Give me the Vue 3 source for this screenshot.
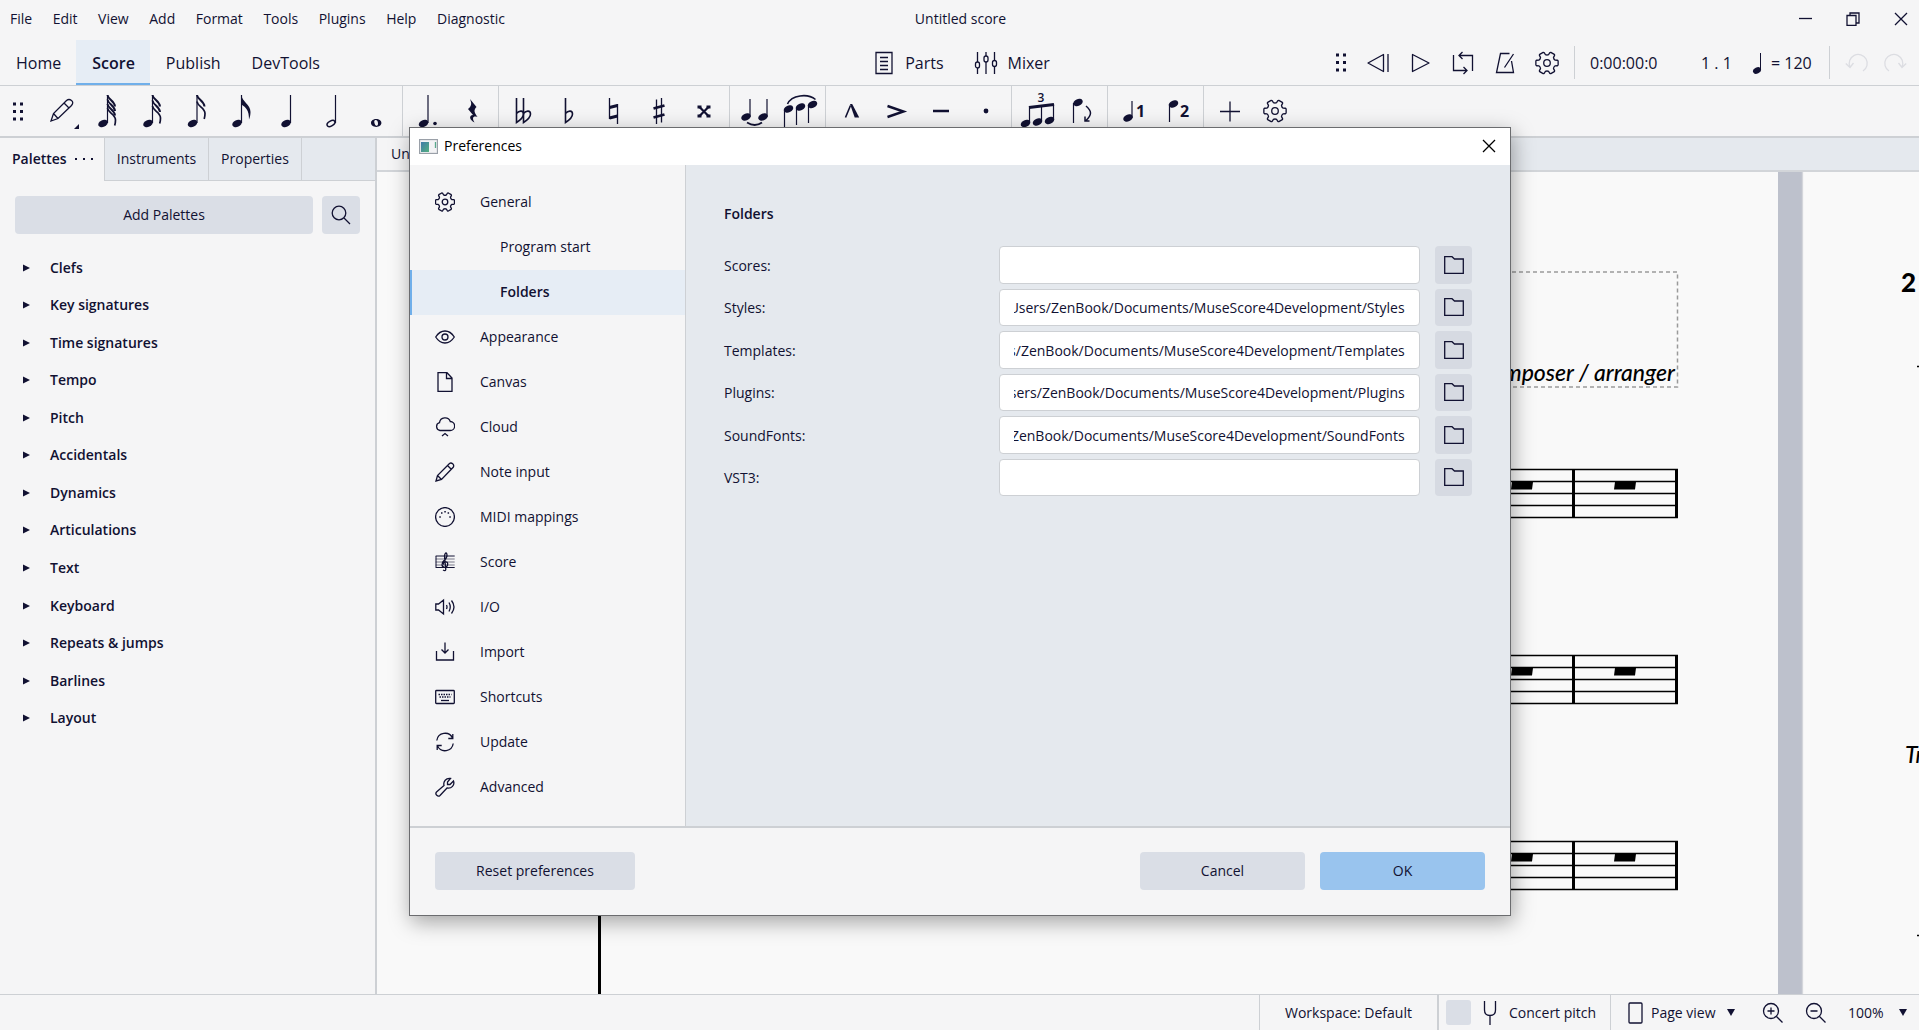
<script setup>
import { onMounted, ref } from 'vue'

const menus = ['File', 'Edit', 'View', 'Add', 'Format', 'Tools', 'Plugins', 'Help', 'Diagnostic']
const pages = ['Home', 'Score', 'Publish', 'DevTools']
const palettes = [
  'Clefs', 'Key signatures', 'Time signatures', 'Tempo', 'Pitch', 'Accidentals', 'Dynamics',
  'Articulations', 'Text', 'Keyboard', 'Repeats & jumps', 'Barlines', 'Layout',
]

const head = (x, y) => `<ellipse cx="${x}" cy="${y}" rx="5" ry="3.4" transform="rotate(-25 ${x} ${y})" fill="currentColor" stroke="none"/>`
const stem = (x, y1, y2) => `<path d="M${x} ${y1}V${y2}" stroke-width="1.2"/>`
const flag = (x, y) => `<path d="M${x} ${y}c.5 4.5 7 6 7.500 11.500" stroke-width="2"/>`
const tail = (x, y) => `<path d="M${x} ${y}c.5 5 8 6 8 12c0 2-.2 3.500-.8 5.500" stroke-width="1.700"/>`

// Outline of a six-toothed cog centred on the given point.
function cog(c, outer, inner) {
  const pt = (r, deg) => {
    const a = (deg * Math.PI) / 180
    return `${(c + r * Math.cos(a)).toFixed(2)} ${(c + r * Math.sin(a)).toFixed(2)}`
  }
  let d = ''
  for (let i = 0; i < 6; i++) {
    const a = i * 60
    d += `${i ? 'L' : 'M'}${pt(inner, a - 19)}L${pt(outer - 0.6, a - 15)}Q${pt(outer, a - 13)} ${pt(outer, a - 10)}`
    d += `L${pt(outer, a + 10)}Q${pt(outer, a + 13)} ${pt(outer - 0.6, a + 15)}L${pt(inner, a + 19)}Q${pt(inner - 1, a + 30)} ${pt(inner, a + 41)}`
  }
  return `<path d="${d}Z"/><circle cx="${c}" cy="${c}" r="${outer * 0.29}"/>`
}

const flat = (x) => `<path d="M${x} 12V36.500c4-2.500 7-5 7-8.500c0-3.500-4-4-7-.5" stroke-width="1.600"/>`

const tool = {
  pencil: '<path d="M12 35l2.500-7.500L27.500 14.500q2.500-2 5 0t0 5L19 32.500zM25 17l5 5M14.500 27.500l4.500 5"/><path d="M40 43v-5l-5 5z" fill="currentColor" stroke="none"/>',
  n64: head(19, 37.5) + stem(23.5, 9, 37) + flag(23.5, 9) + flag(23.5, 13.5) + flag(23.5, 18) + tail(23.5, 22),
  n32: head(19, 37.5) + stem(23.5, 9, 37) + flag(23.5, 9) + flag(23.5, 14.500) + tail(23.5, 20),
  n16: head(18.5, 37.5) + stem(23, 9, 37) + flag(23, 9) + tail(23, 15.500),
  n8: head(18, 37.5) + stem(22.5, 9, 37) + '<path d="M22.500 9c.5 7 9 9 9 17c0 3-.6 5-1.500 7.500c.2-9-3-12-7.500-15z" fill="currentColor" stroke="none"/>',
  n4: head(22, 37.5) + stem(26.5, 9, 37),
  n2: '<ellipse cx="22" cy="37.500" rx="4.300" ry="2.400" transform="rotate(-30 22 37.500)" stroke-width="1.500"/>' + stem(26.5, 9, 37),
  n1: '<path fill-rule="evenodd" d="M17 37c0-2.300 2.300-3.900 5.200-3.900s5.200 1.600 5.200 3.900s-2.300 3.900-5.200 3.900S17 39.300 17 37zM20.300 36.300c.2 2 1.400 3.700 2.600 3.400s1.200-1.700 1-3.200s-1.200-2.800-2.400-2.500s-1.300 1.300-1.200 2.300z" fill="currentColor" stroke="none"/>',
  dot: head(18.5, 37.5) + stem(23, 9, 37) + '<circle cx="30" cy="37.500" r="1.800" fill="currentColor" stroke="none"/>',
  rest: '<path d="M20 13l6.500 8c-3 3-2.500 5 1 10c-4-1.500-6 .5-3 5.500c-5-2.500-6-7-1.500-7.500l-5-6c3.500-3 4-5 2-10z" fill="currentColor" stroke="none"/>',
  dflat: flat(15.5) + flat(22.5),
  flat: flat(19.5),
  natural: '<path d="M18.500 12V33M26.500 18V38" stroke-width="1.300"/><path d="M18.500 21.500l8-2M18.500 32l8-2" stroke-width="3"/>',
  sharp: '<path d="M20.500 13.500V38M25.500 12V36.500" stroke-width="1.300"/><path d="M17.500 22.500l11-3M17.500 31.500l11-3" stroke-width="2.800"/>',
  dsharp: '<path d="M18.500 21l9 9M27.500 21l-9 9" stroke-width="2.200"/><path d="M16.500 19.500h4v3h-4zM25.500 19.500h4v3h-4zM16.500 28.500h4v3h-4zM25.500 28.500h4v3h-4z" fill="currentColor" stroke="none"/>',
  tie: head(14, 31) + stem(18, 13, 31) + head(31, 31) + stem(35, 13, 31) + '<path d="M15 36.500q8 5 15 0" stroke-width="1.800"/>',
  slur: head(11.500, 23) + stem(7.5, 24, 41) + head(23.500, 21) + stem(19.5, 22, 39) + head(35.500, 18.5) + stem(31.5, 19, 37) + '<path d="M10.500 18c4-9 20-11 28-4.500" stroke-width="1.600"/>',
  marcato: '<path d="M17.500 31.500l5-12" stroke-width="1.600"/><path d="M22 18h2.200l7 13.500h-4.500z" fill="currentColor" stroke="none"/>',
  accent: '<path d="M14.500 20l16 5.500l-16 5.500" stroke-width="2.400"/>',
  tenuto: '<path d="M15 25h16" stroke-width="2.500"/>',
  staccato: '<circle cx="23" cy="25" r="2.400" fill="currentColor" stroke="none"/>',
  tuplet: head(11.500, 37.5) + head(23.500, 36) + head(35.500, 34.5) + stem(15.5, 20, 37) + stem(27.500, 20, 35) + stem(39.5, 18, 34) + '<path d="M15 21.500l25-3" stroke-width="3"/><text x="27" y="16" text-anchor="middle" font-size="12" font-weight="600" fill="currentColor" stroke="none">3</text>',
  flip: head(19, 16.500) + stem(14.5, 17, 37) + '<path d="M27 20c6 5 6 9 0 14.500M26 30.500v4.500h4.500" stroke-width="1.500"/>',
  v1: head(18, 32) + stem(22, 15, 32) + '<text x="26" y="31" font-size="16" font-weight="700" fill="currentColor" stroke="none">1</text>',
  v2: head(18.500, 18) + stem(14.5, 18, 36) + '<text x="25" y="31" font-size="16" font-weight="700" fill="currentColor" stroke="none">2</text>',
  plus: '<path d="M14 25.500h20M24 15.500v20"/>',
  cog: `<g transform="translate(12 13)">${cog(12, 11.3, 8.6)}</g>`,
}

const toolGroups = [
  ['pencil', 'n64', 'n32', 'n16', 'n8', 'n4', 'n2', 'n1'],
  ['dot', 'rest'],
  ['dflat', 'flat', 'natural', 'sharp', 'dsharp'],
  ['tie', 'slur'],
  ['marcato', 'accent', 'tenuto', 'staccato'],
  ['tuplet', 'flip'],
  ['v1', 'v2'],
  ['plus', 'cog'],
]

const transport = [
  { name: 'Rewind', d: '<path d="M16.500 3.500v17L1 12zM21 3v18" stroke-linejoin="round"/>' },
  { name: 'Play', d: '<path d="M3.500 3.500v17L20 12z" stroke-linejoin="round"/>' },
  { name: 'Loop', d: '<path d="M2.500 4v15.500H16M12.500 16l3.500 3.500l-3.500 3.500M21.500 20V4.500H8M11.500 1L8 4.500L11.500 8"/>' },
  { name: 'Metronome', d: '<path d="M16.500 2.500h-9L3.500 21.500h17L18.500 10M11.500 16.500L20.500 3"/>' },
  { name: 'Playback settings', d: cog(12, 11.3, 8.6) },
]

const sections = [
  { label: 'General', icon: cog(10, 9.6, 7.3) },
  { label: 'Program start', sub: true },
  { label: 'Folders', sub: true, active: true },
  { label: 'Appearance', icon: '<path d="M.7 10Q4.500 4 10 4t9.300 6Q15.500 16 10 16T.7 10z"/><circle cx="10" cy="10" r="3"/>' },
  { label: 'Canvas', icon: '<path d="M3 .7h9L17 6v13.300H3zM11.500 .7V6.500H17"/>' },
  { label: 'Cloud', icon: '<path d="M5 13.500a4 4 0 0 1-.5-7.800a5.600 5.600 0 0 1 10.800-1.200a4.500 4.500 0 0 1-.3 9zM7 19l3-2.500l3 2.500"/>' },
  { label: 'Note input', icon: '<path d="M1 19l1.500-5.500L14.500 1.500q1.500-1.200 3.200.3t.5 3.500L6.500 17.500zM12.500 3.500l4 4M2.500 13.500l4 4"/>' },
  { label: 'MIDI mappings', icon: '<circle cx="10" cy="10" r="9.400"/><path d="M4.300 10h1.500M6 6h1.500M9.300 4.700h1.500M12.600 6h1.500M14.300 10h1.500" stroke-width="1.500"/>' },
  { label: 'Score', icon: '<path d="M1 4v11.500M.7 4h19M.7 15.500h19" stroke-width="1"/><path d="M.7 7h19M.7 10h19M.7 13h19" stroke-width="1" stroke-opacity=".55"/><path d="M8 18q2.500 1.500 2.800-.5L9.500 4q.5-3 1.500-3t1 3Q11.500 6.500 9 8.500t-2 4.500t3 2.300t2.700-3T10 10t-1 2.500" stroke-width="1.300"/>' },
  { label: 'I/O', icon: '<path d="M.8 7h2.700l5-4v14l-5-4H.8zM11.500 8q1 2 0 4M14 5.500q2.500 4.500 0 9M16.500 3.500q5 6.500 0 13"/>' },
  { label: 'Import', icon: '<path d="M1.500 9v9h17V9M10 .5v10.500M6.500 7.500L10 11l3.500-3.500"/>' },
  { label: 'Shortcuts', icon: '<rect x=".7" y="3.500" width="18.600" height="13" rx=".8"/><path d="M3.500 7.500h13M4.500 10h11" stroke-dasharray="1.500 1"/><path d="M6 13.500h8"/>' },
  { label: 'Update', icon: '<path d="M1.800 8.500A8.300 8.300 0 0 1 17.500 6M18.200 11.500A8.300 8.300 0 0 1 2.500 14M17.800 2v4.500h-4.500M2.200 18v-4.500h4.500"/>' },
  { label: 'Advanced', icon: '<path d="M1.500 15L9 8.500C8 4.500 11 .8 15.500 1.500L12.500 5v2.500H15l3.500-3.500C20 8 16.500 12 12 11L5 18.500Q3.500 20 1.800 18.300T1.500 15z"/>' },
]

const base = 'C:/Users/ZenBook/Documents/MuseScore4Development/'
const folders = ref([
  { id: 'scores', label: 'Scores:', path: '' },
  { id: 'styles', label: 'Styles:', path: base + 'Styles' },
  { id: 'templates', label: 'Templates:', path: base + 'Templates' },
  { id: 'plugins', label: 'Plugins:', path: base + 'Plugins' },
  { id: 'soundfonts', label: 'SoundFonts:', path: base + 'SoundFonts' },
  { id: 'vst3', label: 'VST3:', path: '' },
])

// Long paths show their last part, which is the one that differs.
const form = ref(null)
onMounted(() => {
  form.value.querySelectorAll('input').forEach((el) => {
    el.scrollLeft = el.scrollWidth
  })
})

const staves = [298, 484, 670]
</script>

<template>
  <div class="app">
    <header class="menubar">
      <nav class="menus">
        <button v-for="m in menus" :key="m">{{ m }}</button>
      </nav>
      <h1>Untitled score</h1>
      <div class="window-buttons">
        <button aria-label="Minimize"><svg width="14" height="14"><path d="M1 6.500h13" /></svg></button>
        <button aria-label="Restore"><svg width="14" height="14"><path d="M1 3.500h9v10H1zM4 3.500V1h9v10h-3" /></svg></button>
        <button aria-label="Close"><svg width="14" height="14"><path d="M1 1l12 12M13 1L1 13" /></svg></button>
      </div>
    </header>

    <div class="mainbar">
      <nav class="pages">
        <a v-for="p in pages" :key="p" href="#" :class="{ current: p === 'Score' }">{{ p }}</a>
      </nav>
      <div class="panels">
        <button class="parts">
          <svg width="18" height="24"><path d="M1 1.500h16v21H1zM5 6.500h8M5 10.500h8M5 14.500h8M5 18.500h8" /></svg>Parts
        </button>
        <button class="mixer">
          <svg width="24" height="24"><path d="M3.500 1v10M3.500 17v6M12 1v4M12 11v12M20.500 1v8.500M20.500 15.500v7.500" /><rect x="1.500" y="11" width="4" height="6" rx="2" /><rect x="10" y="5" width="4" height="6" rx="2" /><rect x="18.500" y="9.500" width="4" height="6" rx="2" /></svg>Mixer
        </button>
      </div>
      <div class="transport">
        <svg class="grip" width="12" height="19"><path d="M1 2h3M8 2h3M1 9.500h3M8 9.500h3M1 17h3M8 17h3" stroke-width="3" /></svg>
        <button v-for="t in transport" :key="t.name" :aria-label="t.name"><svg width="24" height="24" v-html="t.d"></svg></button>
        <i class="rule"></i>
        <span class="time">0:00:00:0</span>
        <span class="beat">1 . 1</span>
        <span class="tempo"><svg width="15" height="24"><path d="M8.500 2v17" stroke-width="1" /><ellipse cx="5" cy="19.500" rx="4.200" ry="3" transform="rotate(-25 5 19.500)" fill="currentColor" stroke="none" /></svg>= 120</span>
        <i class="rule late"></i>
        <button class="history" aria-label="Undo" disabled><svg width="24" height="24"><path d="M5 16A9 9 0 1 1 18 20M.8 12.500L5 16.500l3.500-4.500" /></svg></button>
        <button class="history" aria-label="Redo" disabled><svg width="24" height="24"><path d="M19 16A9 9 0 1 0 6 20M23.200 12.500L19 16.500L15.500 12" /></svg></button>
      </div>
    </div>

    <div class="notebar">
      <svg class="grip" width="12" height="19"><path d="M1 2h3M8 2h3M1 9.500h3M8 9.500h3M1 17h3M8 17h3" stroke-width="3" /></svg>
      <div v-for="(g, i) in toolGroups" :key="i" class="tools">
        <button v-for="t in g" :key="t" :aria-label="t"><svg width="45" height="50" v-html="tool[t]"></svg></button>
      </div>
    </div>

    <div class="workspace">
      <aside class="sidebar">
        <div class="side-tabs">
          <button class="current palettes-tab">Palettes<svg width="19" height="4"><path d="M0 2h2M8 2h2M16 2h2" stroke-width="2" /></svg></button>
          <button class="instruments-tab">Instruments</button>
          <button class="properties-tab">Properties</button>
          <span class="filler"></span>
        </div>
        <div class="palette-actions">
          <button class="flat-button add">Add Palettes</button>
          <button class="flat-button search" aria-label="Search">
            <svg width="20" height="20"><circle cx="8" cy="8" r="6.800" /><path d="M13 13l6 6" /></svg>
          </button>
        </div>
        <ul class="palettes">
          <li v-for="p in palettes" :key="p"><svg width="7" height="8"><path d="M0 .5L7 4L0 7.500z" fill="currentColor" stroke="none" /></svg>{{ p }}</li>
        </ul>
      </aside>

      <main class="notation">
        <div class="score-tabs"><button>Untitled score</button></div>
        <div class="canvas">
          <svg class="sheet" width="1542" height="822">
            <rect x="1401" y="0" width="24" height="822" fill="#bdc1cc" stroke="none" />
            <path d="M1425.500 0V822" stroke="#d4d6db" />
            <path d="M400 100H1300.500V215H400" stroke="#9a9a9a" stroke-width="1.500" stroke-dasharray="4 3" />
            <text class="credit" x="1298" y="209" text-anchor="end">Composer / arranger</text>
            <g v-for="y in staves" :key="y">
              <path v-for="n in 5" :key="n" :d="`M222 ${y + (n - 1) * 12 - 0.5}H1301`" stroke="#000" stroke-width="1.300" />
              <path :d="`M1196.500 ${y - 1}v49M1299.500 ${y - 1}v49`" stroke="#000" stroke-width="3" />
              <path :d="`M1135 ${y + 12}h21l-1 7.500h-21zM1238 ${y + 12}h21l-1 7.500h-21z`" fill="#000" stroke="none" />
            </g>
            <path d="M222.500 298V822" stroke="#000" stroke-width="3" />
            <text class="part" x="1524" y="120">2</text>
            <text class="instrument" x="1528" y="591">Tr.</text>
            <path d="M1540 194.500h3M1540 763.500h3" stroke="#000" stroke-width="1.500" />
          </svg>
        </div>
      </main>
    </div>

    <footer class="statusbar">
      <button class="segment ws">Workspace: Default</button>
      <label class="segment pitch">
        <input type="checkbox" />
        <svg width="14" height="24"><path d="M1.500 0v9q0 5.500 5.500 5.500t5.500-5.500V0M7 14.500V24" /></svg>
        Concert pitch
      </label>
      <div class="segment view">
        <svg width="15" height="22"><rect x="1" y="1" width="13" height="20" rx="1" /></svg>
        <select class="mode" aria-label="View mode"><option>Page view</option></select>
        <svg class="caret" width="8" height="7"><path d="M0 0h8L4 7z" fill="currentColor" stroke="none" /></svg>
        <button aria-label="Zoom in"><svg width="22" height="22"><circle cx="9" cy="9" r="7.500" /><path d="M14.500 14.500l6 6M5.500 9h7M9 5.500v7" /></svg></button>
        <button aria-label="Zoom out"><svg width="22" height="22"><circle cx="9" cy="9" r="7.500" /><path d="M14.500 14.500l6 6M5.500 9h7" /></svg></button>
        <select class="percent" aria-label="Zoom"><option>100%</option></select>
        <svg width="8" height="7"><path d="M0 0h8L4 7z" fill="currentColor" stroke="none" /></svg>
      </div>
    </footer>

    <div class="overlay">
      <section class="dialog" role="dialog" aria-label="Preferences">
        <div class="titlebar">
          <svg width="19" height="15">
            <defs><linearGradient id="pane" x1="0" y1="0" x2="1" y2="1"><stop offset="0" stop-color="#3f7aa8" /><stop offset="1" stop-color="#54b080" /></linearGradient></defs>
            <rect x=".5" y=".5" width="18" height="14" fill="#f3f3f5" stroke="#9aa0a8" />
            <rect x="2" y="3" width="8" height="10" fill="url(#pane)" stroke="none" />
            <path d="M16.500 3v6" stroke="#5aa98c" />
          </svg>
          <h2>Preferences</h2>
          <button aria-label="Close"><svg width="14" height="14"><path d="M1 1l12 12M13 1L1 13" /></svg></button>
        </div>
        <div class="dialog-body">
          <nav class="sections">
            <a v-for="s in sections" :key="s.label" href="#" :class="{ sub: s.sub, active: s.active }">
              <svg v-if="s.icon" width="20" height="20" v-html="s.icon"></svg>{{ s.label }}
            </a>
          </nav>
          <div class="content">
            <h3>Folders</h3>
            <form ref="form" class="folders" @submit.prevent>
              <div v-for="f in folders" :key="f.id" class="folder">
                <label :for="f.id">{{ f.label }}</label>
                <input :id="f.id" v-model="f.path" type="text" spellcheck="false" />
                <button type="button" :aria-label="'Choose folder, ' + f.label">
                  <svg width="20" height="18"><path d="M.7 .7h7.300l2.500 2.300h8.800v14.300H.7z" /></svg>
                </button>
              </div>
            </form>
          </div>
        </div>
        <div class="dialog-footer">
          <button class="flat-button reset">Reset preferences</button>
          <button class="flat-button choice">Cancel</button>
          <button class="flat-button choice ok">OK</button>
        </div>
      </section>
    </div>
  </div>
</template>

<style>
body {
  margin: 0;
  overflow: hidden;
}
</style>

<style scoped>
.app {
  position: relative;
  display: flex;
  flex-direction: column;
  height: 100vh;
  background: #f5f5f6;
  color: #111132;
  font: 14px/20px "Open Sans", "Noto Sans", sans-serif;
  overflow: hidden;
}
*,
*::before {
  box-sizing: border-box;
}
button,
input,
select {
  margin: 0;
  padding: 0;
  border: 0;
  background: none;
  color: inherit;
  font: inherit;
}
select {
  appearance: none;
}
a {
  color: inherit;
  text-decoration: none;
}
h1,
h2,
h3,
ul {
  margin: 0;
  padding: 0;
  font: inherit;
  list-style: none;
}
svg {
  display: block;
  flex: none;
  fill: none;
  stroke: currentColor;
  stroke-width: 1.3px;
}

.menubar {
  display: grid;
  grid-template-columns: 1fr auto 1fr;
  align-items: center;
  height: 38px;
  flex: none;
}
.menubar h1 {
  padding-left: 2px;
}
.menus {
  display: flex;
  justify-content: space-between;
  width: 515px;
}
.menus button {
  padding: 0 10px;
}
.window-buttons {
  display: flex;
  justify-content: flex-end;
}
.window-buttons button {
  display: flex;
  justify-content: center;
  width: 48px;
}
.window-buttons button:last-child {
  width: 42px;
  padding-left: 6px;
}

.mainbar {
  display: grid;
  grid-template-columns: 1fr auto 1fr;
  height: 48px;
  padding-top: 2px;
  flex: none;
  border-bottom: 1px solid #cdd0d4;
  font-size: 16px;
}
.pages {
  display: flex;
}
.pages a {
  display: flex;
  align-items: center;
  padding: 0 15px 0 16px;
}
.pages .current {
  background: #e6edf5;
  box-shadow: inset 0 -2px #70afea;
  font-weight: 600;
}
.panels {
  display: flex;
  gap: 30px;
  padding-left: 6px;
}
.panels button {
  display: flex;
  align-items: center;
}
.parts {
  gap: 12px;
}
.mixer {
  gap: 10px;
}
.transport {
  display: flex;
  align-items: center;
  justify-content: flex-end;
  padding-right: 5px;
}
.transport .grip {
  margin-right: 11px;
}
.transport button {
  display: flex;
  justify-content: center;
  width: 42px;
}
.transport .history {
  width: 38px;
  color: #dcdde2;
}
.rule {
  width: 1px;
  height: 33px;
  margin: 0 15px 0 6px;
  background: #cdd0d4;
}
.rule.late {
  margin: 0 8px 0 0;
}
.time {
  width: 111px;
}
.beat {
  width: 51px;
}
.tempo {
  display: flex;
  align-items: center;
  gap: 4px;
  width: 77px;
  white-space: nowrap;
}

.notebar {
  display: flex;
  align-items: center;
  height: 52px;
  padding-left: 12px;
  flex: none;
  border-bottom: 2px solid #cdd0d4;
}
.notebar .grip {
  margin-right: 15px;
}
.tools {
  display: flex;
}
.tools + .tools {
  margin-left: 3px;
  padding-left: 2px;
  border-left: 1px solid #cdd0d4;
}

.workspace {
  display: flex;
  flex: 1;
  min-height: 0;
}
.sidebar {
  width: 377px;
  flex: none;
  border-right: 2px solid #cdd0d4;
}
.side-tabs {
  display: flex;
  height: 43px;
}
.side-tabs > * {
  border-left: 1px solid #cdd0d4;
  border-bottom: 1px solid #cdd0d4;
  background: #e5e9ee;
}
.side-tabs .current {
  display: flex;
  align-items: center;
  justify-content: flex-start;
  gap: 8px;
  padding: 0 0 2px 12px;
  border: 0;
  background: none;
  font-weight: 600;
}
.palettes-tab {
  width: 104px;
}
.instruments-tab {
  width: 104px;
}
.properties-tab {
  width: 93px;
}
.filler {
  flex: 1;
}
.flat-button {
  display: flex;
  align-items: center;
  justify-content: center;
  height: 38px;
  border-radius: 4px;
  background: #dadee6;
}
.palette-actions {
  display: flex;
  gap: 9px;
  padding: 15px;
}
.add {
  flex: 1;
}
.search {
  width: 38px;
}
.palettes {
  display: flex;
  flex-direction: column;
  height: 488px;
  font-weight: 600;
}
.palettes li {
  display: flex;
  flex: 1;
  align-items: center;
  gap: 20px;
  padding-left: 23px;
}

.notation {
  display: flex;
  flex: 1;
  flex-direction: column;
  min-width: 0;
}
.score-tabs {
  display: flex;
  height: 34px;
  border-bottom: 2px solid #d2d5d9;
  background: #e5e9ee;
}
.score-tabs button {
  padding: 0 60px 0 14px;
  background: #f5f5f6;
}
.canvas {
  flex: 1;
  min-height: 0;
  background: #f9f9f9;
  overflow: hidden;
}
.credit {
  fill: #000;
  stroke: none;
  font: italic 500 23px Lato, sans-serif;
}
.part {
  fill: #000;
  stroke: none;
  font: 900 26px Lato, sans-serif;
}
.instrument {
  fill: #000;
  stroke: none;
  font: italic 500 23px Lato, sans-serif;
}

.statusbar {
  display: flex;
  justify-content: flex-end;
  height: 36px;
  flex: none;
  border-top: 1px solid #cdd0d4;
}
.segment {
  display: flex;
  align-items: center;
  border-left: 1px solid #cdd0d4;
}
.ws {
  justify-content: center;
  width: 178px;
}
.pitch {
  gap: 12px;
  width: 173px;
  padding-left: 7px;
  border-left-width: 2px;
}
.pitch input {
  width: 25px;
  height: 25px;
  border-radius: 3px;
  background: #dadee6;
  appearance: none;
}
.view {
  width: 309px;
  padding-left: 17px;
}
.mode {
  width: 76px;
  margin-left: 8px;
}
.caret {
  margin-right: 27px;
}
.view button {
  margin-right: 21px;
}
.percent {
  width: 51px;
}

.overlay {
  position: absolute;
  inset: 0;
  display: flex;
  justify-content: center;
  align-items: flex-start;
  padding: 127px 0 0 1px;
}
.dialog {
  width: 1102px;
  border: 1px solid #6b6c6f;
  background: #f5f5f6;
  box-shadow: 2px 6px 20px rgba(0, 0, 0, 0.35);
}
.titlebar {
  display: flex;
  align-items: center;
  gap: 6px;
  height: 37px;
  padding: 0 14px 1px 9px;
  background: #fff;
  color: #000;
}
.titlebar button {
  margin-left: auto;
}
.dialog-body {
  display: flex;
  border-bottom: 2px solid #cdd0d4;
}
.sections {
  width: 276px;
  padding: 15px 0 16px;
  border-right: 1px solid #cdd0d4;
}
.sections a {
  display: flex;
  align-items: center;
  gap: 25px;
  height: 45px;
  padding: 0 0 1px 25px;
}
.sections .sub {
  padding-left: 90px;
}
.sections .active {
  background: #e6edf5;
  box-shadow: inset 2px 0 #70afea;
  font-weight: 600;
}
.content {
  flex: 1;
  padding: 39px 38px 0;
  background: #e5e9ee;
}
.content h3 {
  font-weight: 600;
}
.folders {
  display: grid;
  grid-template-rows: repeat(6, 1fr);
  gap: 5px;
  height: 250px;
  margin-top: 22px;
}
.folder {
  display: grid;
  grid-template-columns: 275px 1fr 37px;
  align-items: stretch;
}
.folder label {
  align-self: center;
  padding-top: 2px;
}
.folder input {
  min-width: 0;
  margin-right: 15px;
  padding: 2px 14px 0;
  border: 1px solid #cdd0d4;
  border-radius: 4px;
  background: #fff;
}
.folder button {
  display: flex;
  align-items: center;
  justify-content: center;
  border-radius: 4px;
  background: #d6dae2;
}
.dialog-footer {
  display: flex;
  gap: 15px;
  padding: 24px 25px 25px;
}
.reset {
  width: 200px;
  margin-right: auto;
}
.choice {
  width: 165px;
}
.ok {
  background: #99c4ee;
}
</style>
